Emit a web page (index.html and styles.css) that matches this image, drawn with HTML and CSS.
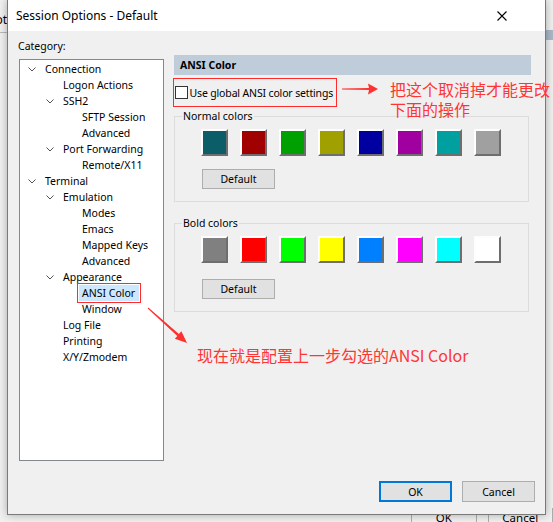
FILE: index.html
```html
<!DOCTYPE html>
<html lang="zh-CN">
<head>
    <meta charset="UTF-8">
    <title>Session Options - Default</title>
    <link rel="stylesheet" href="styles.css">
</head>
<body>
<div class="desktop">
    <div class="bg-toolbar"><span class="bg-tab">Remote</span></div>
    <div class="bg-strip"></div>
    <div class="bg-footer">
        <span class="bg-btn">OK</span>
        <span class="bg-btn">Cancel</span>
    </div>

    <div class="dialog">
        <div class="titlebar">
            <span class="title">Session Options - Default</span>
            <svg class="close" width="10" height="10" viewBox="0 0 10 10">
                <path d="M0.5 0.5 L9.5 9.5 M9.5 0.5 L0.5 9.5" stroke="#000" stroke-width="1.1" fill="none"/>
            </svg>
        </div>

        <div class="dlg-body">
            <div class="left-col">
                <div class="cat-label">Category:</div>
                <div class="tree">
                    <div class="row l0"><span class="chev"><svg width="8" height="5" viewBox="0 0 8 5"><path d="M0.5 0.5 L4 4 L7.5 0.5" stroke="#555" fill="none"/></svg></span>Connection</div>
                    <div class="row l1"><span class="chev"></span>Logon Actions</div>
                    <div class="row l1"><span class="chev"><svg width="8" height="5" viewBox="0 0 8 5"><path d="M0.5 0.5 L4 4 L7.5 0.5" stroke="#555" fill="none"/></svg></span>SSH2</div>
                    <div class="row l2"><span class="chev"></span>SFTP Session</div>
                    <div class="row l2"><span class="chev"></span>Advanced</div>
                    <div class="row l1"><span class="chev"><svg width="8" height="5" viewBox="0 0 8 5"><path d="M0.5 0.5 L4 4 L7.5 0.5" stroke="#555" fill="none"/></svg></span>Port Forwarding</div>
                    <div class="row l2"><span class="chev"></span>Remote/X11</div>
                    <div class="row l0"><span class="chev"><svg width="8" height="5" viewBox="0 0 8 5"><path d="M0.5 0.5 L4 4 L7.5 0.5" stroke="#555" fill="none"/></svg></span>Terminal</div>
                    <div class="row l1"><span class="chev"><svg width="8" height="5" viewBox="0 0 8 5"><path d="M0.5 0.5 L4 4 L7.5 0.5" stroke="#555" fill="none"/></svg></span>Emulation</div>
                    <div class="row l2"><span class="chev"></span>Modes</div>
                    <div class="row l2"><span class="chev"></span>Emacs</div>
                    <div class="row l2"><span class="chev"></span>Mapped Keys</div>
                    <div class="row l2"><span class="chev"></span>Advanced</div>
                    <div class="row l1"><span class="chev"><svg width="8" height="5" viewBox="0 0 8 5"><path d="M0.5 0.5 L4 4 L7.5 0.5" stroke="#555" fill="none"/></svg></span>Appearance</div>
                    <div class="row l2"><span class="chev"></span><span class="sel">ANSI Color</span></div>
                    <div class="row l2"><span class="chev"></span>Window</div>
                    <div class="row l1"><span class="chev"></span>Log File</div>
                    <div class="row l1"><span class="chev"></span>Printing</div>
                    <div class="row l1"><span class="chev"></span>X/Y/Zmodem</div>
                </div>
            </div>

            <div class="right-col">
                <div class="panel-head">ANSI Color</div>
                <div class="check-row">
                    <span class="checkbox"></span>
                    <span class="check-label">Use global ANSI color settings</span>
                </div>

                <fieldset class="group">
                    <legend>Normal colors</legend>
                    <div class="swatches">
                        <span class="swatch" style="background:#0b5e67"></span>
                        <span class="swatch" style="background:#a00000"></span>
                        <span class="swatch" style="background:#00a000"></span>
                        <span class="swatch" style="background:#a0a000"></span>
                        <span class="swatch" style="background:#0000a0"></span>
                        <span class="swatch" style="background:#a000a0"></span>
                        <span class="swatch" style="background:#00a0a0"></span>
                        <span class="swatch" style="background:#a0a0a0"></span>
                    </div>
                    <button class="btn default-btn">Default</button>
                </fieldset>

                <fieldset class="group group-bold">
                    <legend>Bold colors</legend>
                    <div class="swatches">
                        <span class="swatch" style="background:#808080"></span>
                        <span class="swatch" style="background:#ff0000"></span>
                        <span class="swatch" style="background:#00ff00"></span>
                        <span class="swatch" style="background:#ffff00"></span>
                        <span class="swatch" style="background:#0080ff"></span>
                        <span class="swatch" style="background:#ff00ff"></span>
                        <span class="swatch" style="background:#00ffff"></span>
                        <span class="swatch" style="background:#ffffff"></span>
                    </div>
                    <button class="btn default-btn">Default</button>
                </fieldset>
            </div>
        </div>

        <div class="actions">
            <button class="btn btn-ok">OK</button>
            <button class="btn">Cancel</button>
        </div>
    </div>

    <!-- Markierungen -->
    <svg class="arrow arrow-right" width="40" height="14" viewBox="0 0 40 14">
        <polygon points="2,6.4 29,5.9 28,1.5 38,7 28,12.5 29,8.1 2,7.6" fill="#ff3030"/>
    </svg>
    <div class="note note-top">
        <div>把这个取消掉才能更改</div>
        <div>下面的操作</div>
    </div>

    <svg class="arrow arrow-down" width="46" height="42" viewBox="0 0 46 42">
        <polygon points="3.3,2.6 33.9,29.1 36.4,26.3 42,38 29.8,33.7 32.3,30.9 2.7,3.4" fill="#ff3030"/>
    </svg>
    <div class="note note-bottom">现在就是配置上一步勾选的ANSI Color</div>
</div>
</body>
</html>
```

FILE: styles.css
```css
/* Dialog im Windows-Stil */

body {
    margin: 0;
    background-color: #f0f0f0;
}

.desktop {
    position: relative;
    width: 553px;
    height: 522px;
    overflow: hidden;
    display: flex;
    flex-direction: column;
    font-family: "Noto Sans", "Noto Sans CJK SC", sans-serif;
    font-size: 10.5px;
    color: #000;
}

/* Hintergrund-Fenster */
.bg-toolbar {
    height: 33px;
    border-bottom: 1px solid #b9b9b9;
    box-sizing: border-box;
}

.bg-tab {
    display: inline-block;
    margin-left: -30px;
    line-height: 40px;
    font-size: 12px;
}

.bg-strip {
    margin: -3px 0 0 545px;
    height: 10px;
    background-color: #a9b8c8;
}

.bg-footer {
    margin-top: auto;
    display: flex;
    gap: 11px;
    padding-left: 411px;
    height: 14px;
}

.bg-btn {
    width: 72px;
    height: 22px;
    border-left: 1px solid #adadad;
    border-right: 1px solid #adadad;
    text-align: center;
    font-size: 11.5px;
    line-height: 20px;
    box-sizing: border-box;
}

/* Dialogfenster */
.dialog {
    position: absolute;
    left: 7px;
    top: 0;
    width: 539px;
    height: 515px;
    box-sizing: border-box;
    border: 1px solid #7a7a7a;
    border-top: none;
    background-color: #f0f0f0;
    box-shadow: 0 0 8px rgba(0, 0, 0, 0.3);
    display: flex;
    flex-direction: column;
}

.titlebar {
    height: 31px;
    background-color: #fff;
    display: flex;
    align-items: center;
    justify-content: space-between;
    padding: 0 38px 0 8px;
    flex: none;
}

.title {
    font-size: 12px;
}

.close {
    display: block;
}

.dlg-body {
    display: flex;
    gap: 10px;
    padding: 8px 0 0 11px;
    flex: 1;
}

.left-col {
    width: 145px;
}

.cat-label {
    line-height: 14px;
    margin: 0 0 6px -1px;
}

.tree {
    height: 402px;
    box-sizing: border-box;
    border: 1px solid #828790;
    background-color: #fff;
    padding-top: 1px;
}

.row {
    display: flex;
    align-items: center;
    height: 16px;
    line-height: 16px;
    white-space: nowrap;
}

.row.l0 { padding-left: 8px; }
.row.l1 { padding-left: 26px; }
.row.l2 { padding-left: 45px; }

.chev {
    width: 17px;
    flex: none;
    display: flex;
    align-items: center;
}

.chev svg {
    display: block;
}

.sel {
    background-color: #cce8ff;
    padding: 0 4px 0 3px;
    margin-left: -3px;
    outline: 1.5px solid #ff2a2a;
    outline-offset: 1px;
}

.right-col {
    width: 357px;
    margin-top: 16px;
}

.panel-head {
    height: 20px;
    line-height: 20px;
    background-color: #bfcddb;
    font-weight: bold;
    padding-left: 6px;
}

.check-row {
    display: flex;
    align-items: center;
    gap: 2px;
    width: fit-content;
    height: 29px;
    box-sizing: border-box;
    margin: 3px 0 0 -1px;
    padding: 0 3px 0 0.5px;
    border: 1.5px solid #ff2a2a;
    white-space: nowrap;
}

.check-label {
    letter-spacing: -0.15px;
}

.checkbox {
    width: 13px;
    height: 13px;
    box-sizing: border-box;
    border: 1px solid #333;
    background-color: #fff;
}

.group {
    margin: 2px 2px 0 0;
    padding: 6px 0 12px 0;
    border: 1px solid #dcdcdc;
}

.group-bold {
    margin-top: 14px;
}

.group legend {
    margin-left: 7px;
    padding: 0 1px;
    line-height: 14px;
}

.swatches {
    display: flex;
    gap: 12px;
    margin-left: 26px;
}

.swatch {
    width: 27px;
    height: 27px;
    box-sizing: border-box;
    border: 2px solid;
    border-color: #fdfdfd #6e6e6e #6e6e6e #fdfdfd;
}

.btn {
    width: 73px;
    height: 21px;
    box-sizing: border-box;
    border: 1px solid #adadad;
    background-color: #e1e1e1;
    font-family: inherit;
    font-size: 10.5px;
    padding: 0;
    color: #000;
}

.default-btn {
    display: block;
    height: 20px;
    margin: 13px 0 0 27px;
}

.group-bold .default-btn {
    margin-top: 16px;
}

.actions {
    display: flex;
    justify-content: flex-end;
    gap: 10px;
    padding: 0 10px 12px 0;
}

.btn-ok {
    border: 2px solid #0078d7;
}

/* Rote Anmerkungen */
.arrow {
    position: absolute;
}

.arrow-right {
    left: 340px;
    top: 82px;
}

.arrow-down {
    left: 145px;
    top: 305px;
}

.note {
    position: absolute;
    font-family: "Noto Sans CJK SC", sans-serif;
    font-size: 16px;
    line-height: 20px;
    color: #ff3535;
    white-space: nowrap;
}

.note-top {
    left: 390px;
    top: 79px;
}

.note-bottom {
    left: 197px;
    top: 345px;
}
```
